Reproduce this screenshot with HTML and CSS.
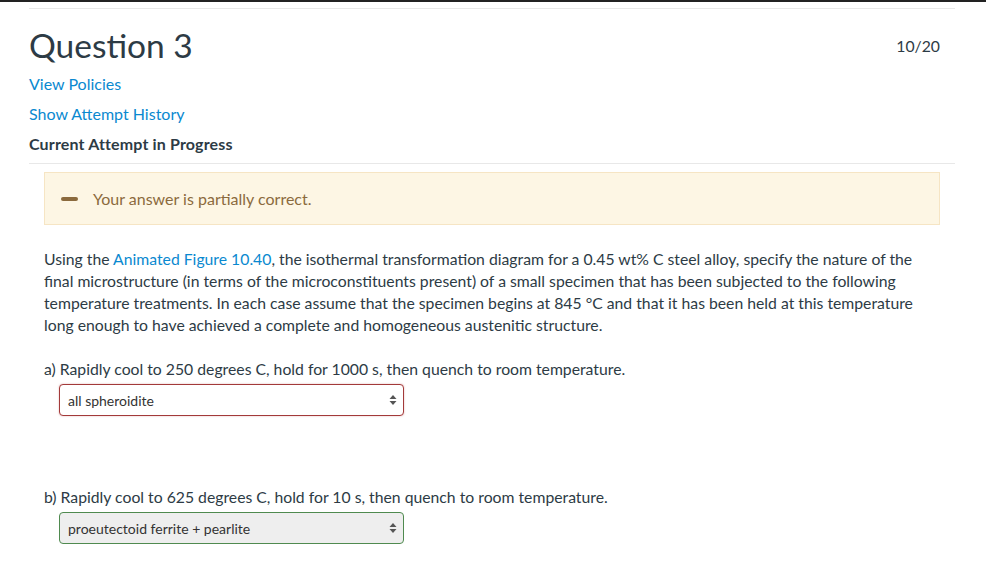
FILE: index.html
```html
<!DOCTYPE html>
<html>
<head>
<meta charset="utf-8">
<link rel="stylesheet" href="styles.css">
</head>
<body>
<div class="topbar"></div>
<div class="page">
  <div class="rule-top"></div>
  <div class="header">
    <h1 class="title">Question 3</h1>
    <div class="score">10/20</div>
  </div>
  <div class="meta">
    <a class="link" href="#">View Policies</a>
    <a class="link" href="#">Show Attempt History</a>
    <div class="status">Current Attempt in Progress</div>
  </div>
  <div class="rule"></div>
  <div class="body">
    <div class="alert">
      <span class="dash"></span>
      <span class="alert-text">Your answer is partially correct.</span>
    </div>
    <p class="prompt">Using the <a class="link" href="#">Animated Figure 10.40</a>, the isothermal transformation diagram for a 0.45 wt% C steel alloy, specify the nature of the final microstructure (in terms of the microconstituents present) of a small specimen that has been subjected to the following temperature treatments. In each case assume that the specimen begins at 845 °C and that it has been held at this temperature long enough to have achieved a complete and homogeneous austenitic structure.</p>
    <div class="part">
      <div class="part-label">a) Rapidly cool to 250 degrees C, hold for 1000 s, then quench to room temperature.</div>
      <div class="select wrong">
        <span>all spheroidite</span>
        <svg class="arrows" width="8" height="12" viewBox="0 0 8 12"><path d="M4 1 L7.5 5 L0.5 5 Z M4 11 L7.5 7 L0.5 7 Z" fill="#555"/></svg>
      </div>
    </div>
    <div class="part part-b">
      <div class="part-label">b) Rapidly cool to 625 degrees C, hold for 10 s, then quench to room temperature.</div>
      <div class="select right">
        <span>proeutectoid ferrite + pearlite</span>
        <svg class="arrows" width="8" height="12" viewBox="0 0 8 12"><path d="M4 1 L7.5 5 L0.5 5 Z M4 11 L7.5 7 L0.5 7 Z" fill="#555"/></svg>
      </div>
    </div>
  </div>
</div>
</body>
</html>
```

FILE: styles.css
```css
html, body {
  margin: 0;
  padding: 0;
  background: #fff;
}
body {
  font-family: Lato, "Open Sans", sans-serif;
  color: #2d3b45;
  font-size: 15.75px;
}
.topbar {
  height: 2px;
  background: #222;
}
.page {
  margin-left: 29px;
  width: 926px;
}
.rule-top {
  margin-top: 6px;
  height: 1px;
  background: #e8e8e8;
}
.header {
  display: flex;
  justify-content: space-between;
  align-items: flex-start;
  margin-top: 17px;
}
.title {
  margin: 0;
  font-size: 33.5px;
  font-weight: 400;
  line-height: 38px;
  color: #2d3b45;
}
.score {
  font-size: 15.75px;
  line-height: 20px;
  margin-top: 10px;
  margin-right: 15px;
}
.meta {
  display: flex;
  flex-direction: column;
  align-items: flex-start;
  margin-top: 5px;
  font-size: 16px;
}
.meta .link, .status {
  line-height: 30px;
}
.link {
  color: #0a89d0;
  text-decoration: none;
}
.status {
  font-weight: 700;
  letter-spacing: 0.15px;
}
.rule {
  margin-top: 4px;
  height: 1px;
  background: #e8e8e8;
}
.body {
  padding: 0 15px;
}
.alert {
  margin-top: 8px;
  height: 51px;
  background: #fdf6e4;
  border: 1px solid #f6e5c4;
  display: flex;
  align-items: center;
  padding-left: 16px;
  color: #8b6a3d;
}
.dash {
  width: 17px;
  height: 4px;
  border-radius: 2px;
  background: #8b6a3d;
  margin-right: 15px;
}
.alert-text {
  font-size: 16px;
}
.prompt {
  margin: 23px 0 0;
  line-height: 22px;
}
.part {
  margin-top: 22px;
}
.part-b {
  margin-top: 70px;
}
.part-label {
  line-height: 22px;
}
.select {
  margin-top: 4px;
  margin-left: 15px;
  width: 345px;
  height: 32px;
  box-sizing: border-box;
  border-radius: 4px;
  display: flex;
  align-items: center;
  justify-content: space-between;
  padding: 0 6px 0 8px;
  font-size: 14px;
  color: #333;
}
.select.wrong {
  background: #fff;
  border: 1px solid #a33a3a;
  box-shadow: 0 0 2px rgba(170, 40, 40, 0.35);
}
.select.right {
  background: #eeeeee;
  border: 1px solid #4f8a4f;
}
.arrows {
  display: block;
}
```
